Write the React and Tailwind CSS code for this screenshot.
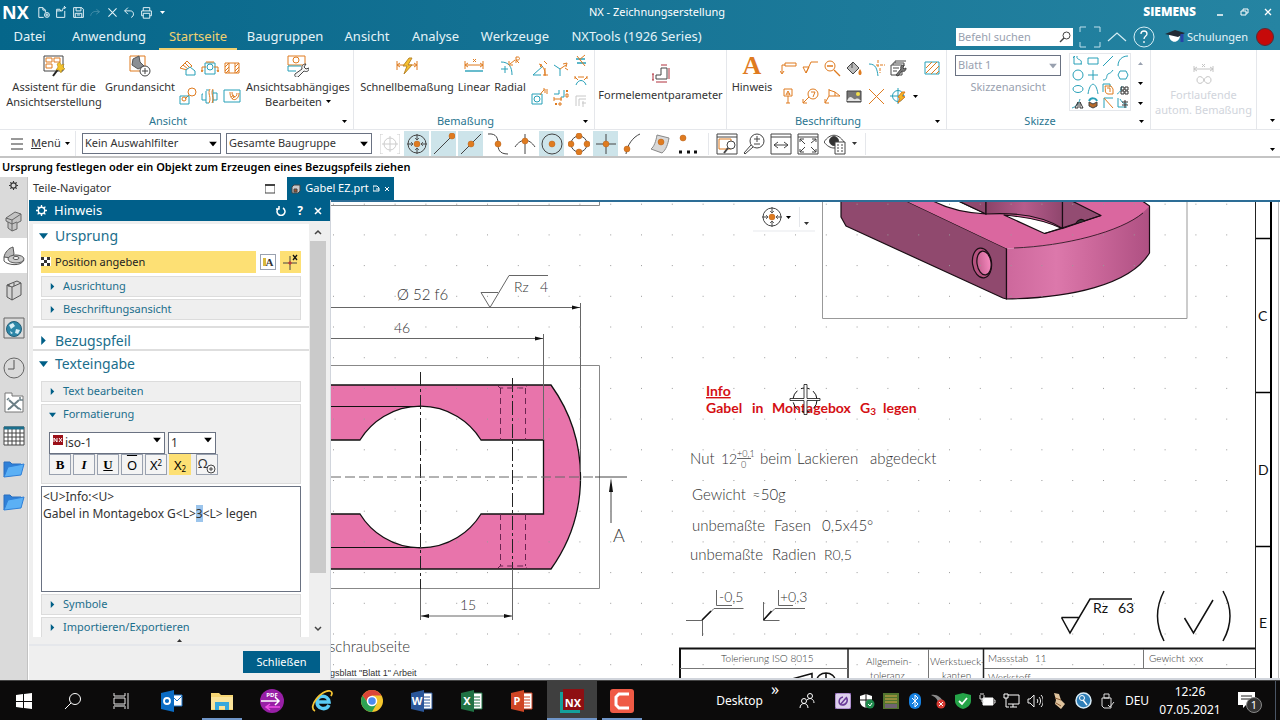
import React, { useEffect, useRef, useState } from "react";

const O = "#df7b1f";
const T = "#27a0b8";
const K = "#444444";

// -----------------------------
// Small building blocks
// -----------------------------
const Svg = ({ w = 20, h = w, vb, children, className = "" }) => (
  <svg
    width={w}
    height={h}
    viewBox={vb || `0 0 ${w} ${h}`}
    fill="none"
    stroke={K}
    className={`shrink-0 ${className}`}
    aria-hidden="true"
  >
    {children}
  </svg>
);

const Caret = ({ className = "text-black" }) => (
  <svg width="5" height="3" viewBox="0 0 5 3" className={`shrink-0 fill-current ${className}`} aria-hidden="true">
    <path d="M0 0h5L2.5 3z" />
  </svg>
);

const Select = ({ label, options, className = "", wrap = "", caret = "text-black", icon, ...props }) => (
  <div className={`relative ${wrap}`}>
    {icon && <span className="absolute left-1 top-0 h-full flex items-center">{icon}</span>}
    <select
      aria-label={label}
      className={`w-full h-full appearance-none border border-gray-500 rounded-none bg-white outline-none ${className}`}
      {...props}
    >
      {options.map((o) => (
        <option key={o}>{o}</option>
      ))}
    </select>
    <svg width="8" height="5" viewBox="0 0 8 5" className={`absolute right-1 top-1/2 -translate-y-1/2 pointer-events-none fill-current ${caret}`}>
      <path d="M0 0h8L4 5z" />
    </svg>
  </div>
);

const Dot = ({ x, y }) => <circle cx={x} cy={y} r="3" fill={O} stroke="#b8611a" strokeWidth="0.5" />;

const Target = () => (
  <Svg w={20}>
    <circle cx="10" cy="10" r="9" />
    <path d="M10 0v6M10 14v6M0 10h6M14 10h6" />
    <path d="M8 4l2 2 2-2M8 16l2-2 2 2M4 8l2 2-2 2M16 8l-2 2 2 2" strokeWidth="0.8" />
    <Dot x="10" y="10" />
  </Svg>
);

const Gear = ({ color = "#333", size = 11 }) => (
  <Svg w={size} vb="0 0 11 11">
    <circle cx="5.5" cy="5.5" r="3.2" stroke={color} strokeWidth="1.4" />
    <path
      d="M5.5 0v2M5.5 9v2M0 5.5h2M9 5.5h2M1.6 1.6l1.4 1.4M8 8l1.4 1.4M9.4 1.6L8 3M3 8L1.6 9.4"
      stroke={color}
      strokeWidth="1.3"
    />
  </Svg>
);

// -----------------------------
// Title bar and menu tabs
// -----------------------------
const quickIcons = [
  ["Neu", <path d="M1 2h5l3 3v3M1 2v12h6M6 2v3h3M11 8a3 3 0 1 1 0 6a3 3 0 1 1 0-6M11 9v4M9 11h4" />],
  ["Öffnen", <path d="M9 6H2v8h10V6M2 6V4h4l1 2M9 6c0-3 1-4 4-4M11 0l2 2-2 2" />],
  ["Speichern", <path d="M2 2h10l2 2v10H2zM5 2v4h6V2M4 14V9h8v5M6 11h4" />],
  ["Wiederholen", <path d="M2 12c1-5 5-6 10-5M9 4l4 3-4 3" opacity="0.25" />],
  ["Löschen", <path d="M3 3l10 10M13 3L3 13" strokeWidth="1.3" />],
  ["Rückgängig", <path d="M2 6h7c5 0 5 7 1 8M6 2L2 6l4 4" />],
  ["Drucken", <path d="M4 6V2h8v4M4 12H2V6h12v6h-2M4 9h8v6H4z" />],
];

const TitleBar = () => (
  <div className="h-6 flex items-center text-white">
    <div className="flex-1 flex items-center">
      <span className="w-9 pl-[2px] font-bold text-lg leading-6 font-[Open_Sans]">NX</span>
      <div className="flex items-center gap-[2px] pl-px">
        {quickIcons.map(([name, path]) => (
          <button key={name} aria-label={name} className="w-[15px] h-4 flex items-center justify-center">
            <Svg w={13} vb="0 0 16 16">
              <g stroke="#e6f4f8" strokeWidth="1.2">{path}</g>
            </Svg>
          </button>
        ))}
        <Caret className="text-white ml-1" />
      </div>
    </div>
    <h1 className="pl-[34px] text-[11px]">NX - Zeichnungserstellung</h1>
    <div className="flex-1 flex items-center justify-end">
      <span className="font-[Open_Sans] font-extrabold text-[12px] mr-5">SIEMENS</span>
      <button aria-label="Minimieren" className="w-6"><Svg w={8}><path d="M1 7h6" stroke="#fff" strokeWidth="1.5" /></Svg></button>
      <button aria-label="Wiederherstellen" className="w-6"><Svg w={9}><path d="M3 3V1h5v4H6M1 3h5v4H1z" stroke="#fff" /></Svg></button>
      <button aria-label="Fenster schließen" className="w-4"><Svg w={8}><path d="M1 1l6 6M7 1L1 7" stroke="#fff" strokeWidth="1.3" /></Svg></button>
    </div>
  </div>
);

const tabs = [
  ["Datei", "w-[59px]"],
  ["Anwendung", "w-[100px]"],
  ["Startseite", "w-[78px]"],
  ["Baugruppen", "w-[96px]"],
  ["Ansicht", "w-[68px]"],
  ["Analyse", "w-[69px]"],
  ["Werkzeuge", "w-[90px]"],
  ["NXTools (1926 Series)", "w-[153px]"],
];

const MenuTabs = () => (
  <nav className="h-[26px] flex items-stretch text-[#e4f3f8] text-[13px]">
    {tabs.map(([name, width]) => (
      <button
        key={name}
        className={`${width} whitespace-nowrap border-b-2 pt-[2px] ${
          name === "Startseite" ? "text-[#f0d070] border-[#f0d070]" : "border-transparent"
        }`}
      >
        {name}
      </button>
    ))}
    <div className="flex-1 flex items-center justify-end gap-[6px] pr-[6px]">
      <label className="w-[117px] h-[18px] bg-white flex items-center px-[2px]">
        <input
          aria-label="Befehl suchen"
          placeholder="Befehl suchen"
          className="w-full min-w-0 text-[11px] placeholder:text-gray-400 outline-none text-black"
        />
        <Svg w={12}><circle cx="7.5" cy="4.5" r="3.5" /><path d="M5 7l-4 4" strokeWidth="1.5" /></Svg>
      </label>
      <button aria-label="Vollbild"><Svg w={22}><path d="M1 6V1h6M15 1h6v5M21 16v5h-6M7 21H1v-5" stroke="#bfe0ec" /></Svg></button>
      <button aria-label="Multifunktionsleiste"><Svg w={20} h={12}><path d="M1 10l9-8 9 8" stroke="#d6eef5" strokeWidth="1.2" /></Svg></button>
      <button aria-label="Hilfe">
        <Svg w={22}>
          <circle cx="11" cy="11" r="10" stroke="#d6eef5" />
          <path d="M8 8c0-4 6-4 6 0c0 2-3 2-3 5M11 15v2" stroke="#fff" strokeWidth="1.3" />
        </Svg>
      </button>
      <button className="flex items-center gap-[2px] text-[11px] ml-1 mr-[2px]">
        <Svg w={20} h={14}>
          <path d="M4 5c0 9 11 9 11 0z" fill="#fff" stroke="none" />
          <path d="M0 4l10-4 10 3-7 4z" fill="#222a35" stroke="none" />
          <path d="M17 4v8" stroke="#2844a8" strokeWidth="3" />
        </Svg>
        Schulungen
      </button>
      <span className="w-[18px] h-[18px] rounded-full bg-[#c60a0a] border border-[#5a2a35]" />
    </div>
  </nav>
);

// -----------------------------
// Ribbon
// -----------------------------
const RibbonButton = ({ icon, lines, width, menu, className = "" }) => (
  <button className={`${width} flex flex-col items-center whitespace-nowrap text-[11px] leading-[15px] ${className}`}>
    <span className="h-[26px] flex items-center justify-center">{icon}</span>
    {lines.map((l, i) => (
      <span key={l} className="flex items-center gap-1">
        {l}
        {menu && i === lines.length - 1 && <Caret />}
      </span>
    ))}
  </button>
);

const Group = ({ label, children, className = "" }) => (
  <section className={`relative flex flex-col border-r border-gray-200 pt-[3px] ${className}`}>
    <div className="h-[60px] flex items-start">{children}</div>
    {label !== undefined && (
      <div className="h-4 flex items-center text-[11px] text-[#2a7590] pr-[6px]">
        <span className="flex-1 text-center pr-[6px]">{label}</span>
        <Caret />
      </div>
    )}
  </section>
);

const IconGrid = ({ icons, cols, className = "" }) => (
  <div className={`grid ${cols} ${className}`}>
    {icons.map((icon, i) => (
      <button key={i} aria-label={`Werkzeug ${i + 1}`} className="h-7 flex items-center justify-center">
        {icon}
      </button>
    ))}
  </div>
);

const viewIcons = [
  <Svg w={18}><path d="M1 9L8 2l5 5-5 4zM4 6l5 4M6 4l4 4" stroke={O} /><path d="M7 16v-5l4-3 5 4v4z" stroke={T} fill="#fff" /></Svg>,
  <Svg w={18}><path d="M4 4h10v11H4z" stroke={T} /><circle cx="9" cy="8" r="3" stroke={T} /><path d="M1 12V8h4M17 12V8h-4M0 11l1 2 1-2M16 11l1 2 1-2M5 3h8" stroke={O} /></Svg>,
  <Svg w={16}><path d="M1 3h14v10H1zM5 3v10M11 3v10M1 7l4-4M1 11l4-4M2 13l3-3M11 7l4-4M11 11l4-4M12 13l3-3" stroke={O} /></Svg>,
  <Svg w={18}><circle cx="13" cy="5" r="4" stroke={O} /><path d="M10 8l-4 4" stroke={O} /><path d="M1 9h9v8H1z" stroke={T} /><circle cx="5" cy="12" r="2" stroke={O} /></Svg>,
  <Svg w={18}><path d="M5 4v12M2 7H1v6h4M5 3h3M5 16h3M12 3v13M12 6h4v7h-4" stroke={T} /><path d="M9 2c-3 5 2 8-1 14M12 2c-3 5 2 8-1 14" stroke={O} /></Svg>,
  <Svg w={18}><path d="M1 3h16v12H1z" stroke={T} /><path d="M7 5c0 11 9 9 9 1M9 5c0 7 5 6 5 1M8 10l3-2M9 12l3-3" stroke={O} /></Svg>,
];

const dimIcons = [
  <Svg w={18}><path d="M12 6L2 15h8" stroke={T} /><path d="M9 5c4 2 5 5 5 10M8 4l3 1-2 2M13 1l3 3M12 15h5M14 8v8" stroke={O} /></Svg>,
  <Svg w={18}><path d="M8 16V9L2 5" stroke={T} /><path d="M8 9l6-4M11 4l4-1-1 4M13 8l3 2" stroke={O} /></Svg>,
  <Svg w={18}><path d="M1 6h10v10H1z" stroke={T} /><circle cx="6" cy="11" r="3" stroke={T} /><path d="M9 7l2-3 2-2M12 1h2v4M16 1v5" stroke={O} /></Svg>,
  <Svg w={18}><path d="M2 6h5V2M12 2v7h-3" stroke={T} /><path d="M2 11h8M2 9v4M9 9v4M3 15l2 2M5 15l-2 2M7 15h2v2H7zM14 2l2 2M16 2l-2 2M14 6h2v3h-2z" stroke={O} /></Svg>,
];

const dimSmall = [
  <Svg w={14}><path d="M2 5h9M3 9h9" stroke={T} strokeWidth="1.4" /><path d="M3 2l8 10M11 1l-6 5" stroke={O} /></Svg>,
  <Svg w={14}><path d="M2 11c2-6 8-6 10 0" stroke={T} /><path d="M1 3l3 3M13 3l-3 3M4 3h6M1 2v3M13 2v3" stroke={O} /></Svg>,
  <Svg w={14}><path d="M2 12V2h10M5 12V5h7M8 9h4M9 7v6" stroke="#c8c8c8" /></Svg>,
];

const noteIcons = [
  <Svg w={17}><path d="M5 3h11v3H5zM5 5H2v8M0 11l2 3 2-3" stroke={O} /></Svg>,
  <Svg w={17}><path d="M1 7h6l-3 6-3-6M4 13L9 2h7" stroke={O} /></Svg>,
  <Svg w={17}><circle cx="6" cy="6" r="5" stroke={O} /><path d="M3 6h6M10 10l6 6" stroke={O} strokeWidth="1.4" /></Svg>,
  <Svg w={17}><path d="M1 8l6-6 6 6-6 6z" fill="#bbb" /><path d="M6 3v5" /><path d="M14 9c3 4 1 6 0 6s-3-2 0-6z" fill={O} stroke="none" /></Svg>,
  <Svg w={17}><path d="M1 4c7 0 8 5 9 12" stroke={T} /><path d="M10 0v3M10 5v2M8 5h9M12 8v5" stroke={O} strokeDasharray="3 1" /></Svg>,
  <Svg w={17}><path d="M1 5h11v10H1zM3 5V3h11v3M5 3V1h11" /><path d="M3 8h6M3 11h4" /><path d="M6 15l5-6c-1-3 1-4 3-4l-1 3 1 1 2-1c0 3-2 4-4 3l-4 5z" fill="#777" stroke="#444" /></Svg>,
  <Svg w={17}><path d="M4 1h8v7H4zM8 8v7M6 15h4" stroke={O} /><path d="M6 7l2-4 2 4M7 6h3" stroke={O} /></Svg>,
  <Svg w={17}><circle cx="11" cy="6" r="5" stroke={O} /><path d="M9 4h4l-2 5M7 9l-6 6M1 11v4h4" stroke={O} /></Svg>,
  <Svg w={17}><path d="M5 1v7L1 15M1 11v4h4M5 2l6 2v4H5M11 4l5 4h-5" stroke={O} /></Svg>,
  <Svg w={17}><path d="M1 3h14v11H1z" fill="#777" /><path d="M1 13c3-7 5-3 7-2s3-3 7 2z" fill="#e5e5e5" stroke="none" /><circle cx="12" cy="6" r="2" fill="#f4e04a" stroke="none" /></Svg>,
  <Svg w={17}><path d="M1 1l15 15M16 1L1 16" stroke={O} /></Svg>,
  <Svg w={17}><circle cx="8" cy="8" r="5.5" stroke={T} /><path d="M8 0v16M0 8h15" stroke={T} /><path d="M12 4L8 9l2 1-2 5 7-6-3-1 3-4z" fill="#f2b824" stroke={O} /></Svg>,
];

const galleryPaths = [
  <path d="M2 1v8h8M5 1c-1 5 6 2 4 8M1 3l2-2" />,
  <path d="M1 3h10v6H1z" />,
  <path d="M1 11L11 1" />,
  <path d="M1 11C1 5 5 1 11 1" />,
  <circle cx="6" cy="6" r="5" />,
  <path d="M6 1v10M1 6h10" />,
  <path d="M1 11c5 0 3-5 5-6s3-1 5-4" />,
  <path d="M3 2h6l2 4-2 4H3L1 6z" />,
  <ellipse cx="6" cy="6" rx="5" ry="3.5" />,
  <path d="M1 11C3-2 9-2 11 11" />,
  <g><path d="M1 9V1h7v3" /><path d="M3 3h6l2 3v5H6c-4-1-2-4-3-8zM5 5h3v4" stroke={O} /></g>,
  <g><path d="M0 11c2-1 4-3 5-8" /><path d="M4 4h3v3H4zM8 4h3v3H8zM4 8h3v3H4zM8 8h3v3H8z" stroke="#333" /></g>,
  <g><path d="M0 11c3-1 7-4 8-9" /><path d="M3 11l3-6v6zM8 11V5l3 6z" stroke="#333" /></g>,
  <g><path d="M2 4c2-4 7-3 8 0" strokeWidth="2" /><path d="M2 5l4 2 4-2v4l-4 2-4-2z" fill="#b76a2b" stroke="#444" /></g>,
  <g><path d="M2 11V1h9" /><path d="M2 1l9 10" stroke={O} /></g>,
  <g><path d="M1 1v9h9M3 2c3 5 4 5 7 5" /><path d="M5 5h6M5 8h6M8 3v8" stroke="#333" /></g>,
];

const Ribbon = () => (
  <div className="h-[80px] flex bg-white border-b border-gray-200">
    <Group label="Ansicht">
      <RibbonButton
        width="w-[108px]"
        lines={["Assistent für die", "Ansichtserstellung"]}
        icon={
          <Svg w={22}>
            <path d="M1 1h19v15H1z" />
            <path d="M3 3h6v4H3zM11 3h6v4h-6zM3 9h6v4H3z" stroke={O} />
            <path d="M10 21l6-8" stroke="#222" strokeWidth="2" />
            <path d="M17 7l1 3 3-1-1 3 2 2-3 1-1 3-2-3-3 0 2-3-1-3z" fill="#f3c22b" stroke="#a57a10" strokeWidth="0.5" />
          </Svg>
        }
      />
      <RibbonButton
        width="w-[64px]"
        lines={["Grundansicht"]}
        icon={
          <Svg w={22}>
            <path d="M1 1h15v15H1z" stroke={O} />
            <path d="M4 4l6-3 1 6 4 4-6 3-6-4z" fill="#8b8f94" stroke="#555" />
            <circle cx="16" cy="16" r="5" fill="#fff" /><path d="M13 16h6M16 13v6" />
          </Svg>
        }
      />
      <IconGrid icons={viewIcons} cols="grid-cols-[22px_22px_22px]" className="ml-[5px] mt-px" />
      <RibbonButton
        width="w-[110px]"
        menu
        lines={["Ansichtsabhängiges", "Bearbeiten"]}
        icon={
          <Svg w={22}>
            <path d="M1 1h17v9H1z" stroke={O} /><circle cx="9" cy="5" r="3" stroke={O} />
            <path d="M1 16v-5h13M1 16h8" stroke={T} />
            <path d="M8 19l7-5c-1-4 2-5 4-5l-2 3 2 2 3-1c0 4-3 4-5 3l-6 6c-2 1-4-1-3-3z" fill="#f3f3f3" />
          </Svg>
        }
      />
    </Group>

    <Group label="Bemaßung">
      <RibbonButton
        width="w-[106px]"
        lines={["Schnellbemaßung"]}
        icon={<Svg w={22}><path d="M1 6v9M21 6v9M1 10h20M4 8l-3 2 3 2M18 8l3 2-3 2" stroke={O} /><path d="M13 3l-6 8h4l-3 8 8-9h-4l4-7z" fill="#f7c12e" stroke="#b9862a" /></Svg>}
      />
      <RibbonButton
        width="w-[28px]"
        lines={["Linear"]}
        icon={<Svg w={20}><path d="M1 5v8M19 5v8M1 9h18M4 7L1 9l3 2M16 7l3 2-3 2M9 3l3 3M12 3L9 6" stroke={O} /><path d="M1 15h18" stroke={T} strokeWidth="1.4" /></Svg>}
      />
      <RibbonButton
        width="w-[44px]"
        lines={["Radial"]}
        icon={<Svg w={20}><path d="M1 6c8 0 11 5 11 13M5 10v7M1 13h7" stroke={T} /><path d="M10 8l5-4M9 5v4h4M16 7V1h2c2 0 2 3 0 3h-2l3 3" stroke={O} /></Svg>}
      />
      <IconGrid icons={dimIcons} cols="grid-cols-[21px_21px]" className="-ml-[3px] mt-[2px]" />
      <div className="w-5 mr-[3px] flex flex-col items-center gap-[6px] pt-px">
        {dimSmall.map((icon, i) => (
          <button key={i} aria-label={`Bemaßung ${i + 1}`} className="h-[14px]">{icon}</button>
        ))}
      </div>
    </Group>

    <Group>
      <RibbonButton
        width="w-[131px]"
        className="mt-[8px]"
        lines={["Formelementparameter"]}
        icon={<Svg w={20}><path d="M10 4v7H5v4h11V4z" /><path d="M10 1h6M18 4v11M5 18h11M1 10h2M2 10v6M1 16h2" stroke="#b0303c" /></Svg>}
      />
    </Group>

    <Group label="Beschriftung">
      <RibbonButton
        width="w-[50px]"
        lines={["Hinweis"]}
        icon={<span className="font-['Liberation_Serif'] font-bold text-[26px] leading-6 text-[#df7b1f]">A</span>}
      />
      <IconGrid icons={noteIcons} cols="grid-cols-[22px_22px_22px_22px_22px_22px]" className="mt-px" />
      <div className="w-[37px] flex flex-col">
        <button aria-label="Schraffur" className="h-7 flex items-center justify-end mt-px pr-[6px]">
          <Svg w={16}><path d="M1 2h14v12H1z" stroke={T} /><path d="M2 8l6-6M2 13L13 2M7 14l8-8M12 14l3-3" stroke={O} /></Svg>
        </button>
        <span className="h-7 flex items-center pl-1"><Caret /></span>
      </div>
    </Group>

    <Group label="Skizze">
      <div className="w-[106px] ml-2 mt-[2px] text-[11px] text-gray-400 text-center">
        <Select label="Blatt" options={["Blatt 1"]} disabled wrap="h-[21px]" className="pl-[2px] border-gray-300 bg-gray-50 text-gray-400" caret="text-gray-400" />
        <span className="block leading-[22px]">Skizzenansicht</span>
      </div>
      <div className="ml-2 border border-gray-200 grid grid-cols-[15px_15px_15px_15px] grid-rows-[14px_14px_14px_14px] place-items-center">
        {galleryPaths.map((p, i) => (
          <button key={i} aria-label={`Skizze ${i + 1}`}>
            <Svg w={12}><g stroke={T}>{p}</g></Svg>
          </button>
        ))}
      </div>
      <div className="w-[19px] h-full flex flex-col items-center justify-around">
        <Caret className="text-gray-400 rotate-180" />
        <Caret />
        <Caret />
      </div>
    </Group>

    <Group>
      <RibbonButton
        width="w-[105px]"
        className="text-gray-300 mt-[8px]"
        lines={["Fortlaufende", "autom. Bemaßung"]}
        icon={<Svg w={22}><path d="M1 3v6M20 3v6M1 6h19M4 4L1 6l3 2M17 4l3 2-3 2M9 1l3 3M12 1L9 4M11 17c-2-5-7-4-7 0s5 5 7 0c2-5 7-4 7 0s-5 5-7 0" stroke="#c4c4c4" /></Svg>}
      />
    </Group>
    <div className="flex-1 flex items-end justify-end pr-[5px] pb-[7px]"><Caret /></div>
  </div>
);

// -----------------------------
// Selection bar
// -----------------------------
const snapIcons = [
  [<Svg w={20}><circle cx="10" cy="10" r="6" stroke="#ccc" /><path d="M10 2v16M2 10h16M3 0H0v20h3M17 0h3v20h-3" stroke="#ccc" /></Svg>, false],
  [<Target />, true],
  [<Svg w={22}><path d="M1 21L20 2" /><Dot x="19" y="3" /></Svg>, true],
  [<Svg w={22}><path d="M1 21L21 1" /><Dot x="11" y="11" /></Svg>, true],
  [<Svg w={22}><path d="M1 1c9-1 10 5 10 10s1 10 10 10" /><Dot x="11" y="11" /></Svg>, false],
  [<Svg w={22}><path d="M1 14c6-9 14-9 20 0M11 1v20" /><Dot x="11" y="8" /></Svg>, false],
  [<Svg w={22}><circle cx="11" cy="11" r="10" /><Dot x="11" y="11" /></Svg>, true],
  [<Svg w={22}><circle cx="11" cy="11" r="8" /><Dot x="11" y="3" /><Dot x="11" y="19" /><Dot x="3" y="11" /><Dot x="19" y="11" /></Svg>, false],
  [<Svg w={22}><path d="M11 1v20M1 11h20" /><Dot x="11" y="11" /></Svg>, true],
  [<Svg w={22}><path d="M4 21C5 12 11 4 18 1" /><Dot x="5" y="16" /></Svg>, false],
  [<Svg w={22}><path d="M2 16C5 14 7 8 8 2l12 3c-1 6-3 12-7 15z" fill="#d8d8d8" stroke="#888" /><Dot x="12" y="9" /></Svg>, false],
  [<Svg w={22}><Dot x="7" y="5" /><path d="M3 19h3M11 19h3M18 19h3" stroke="#111" strokeWidth="3" /></Svg>, false],
];

const zoomIcons = [
  <Svg w={22}><path d="M1 1h20v20H1zM1 4h20" /><path d="M3 6h12v10H3z" stroke={O} /><circle cx="15" cy="12" r="4" fill="#fff" /><path d="M12 15l-4 5" strokeWidth="2" /></Svg>,
  <Svg w={22}><circle cx="14" cy="8" r="7" /><path d="M11 6h6M14 3v6M11 11h6M8 12l-7 8 1 1 8-7" /></Svg>,
  <Svg w={22}><path d="M1 1h20v20H1zM1 4h20M4 12h14M8 9l-4 3 4 3M14 9l4 3-4 3" /></Svg>,
  <Svg w={22}><path d="M1 1h20v20H1zM1 4h20M3 6l5 5M3 6h4M3 6v3M19 6l-5 4M19 6h-4M19 6v3M3 19l5-5M3 19h4M3 19v-3M19 19l-5-5M19 19h-4M19 19v-3" /></Svg>,
  <Svg w={22}><path d="M0 9c6-9 14-9 20 0c-6 8-14 8-20 0z" /><circle cx="10" cy="8" r="4.5" fill="#333" /><path d="M11 9h10v12H11z" fill="#fff" /><path d="M13 12h2M17 12h2M13 15h2M17 15h2M13 18h2M17 18h2" /></Svg>,
];

const SelectionBar = () => (
  <div className="h-7 flex items-center pt-px bg-white border-b-2 border-[#c4c4c4] text-[11px]">
    <button className="w-[76px] h-full flex items-center gap-[8px] pl-[11px] border-r border-gray-200">
      <Svg w={12}><path d="M0 1h12M0 6h12M0 11h12" stroke="#333" /></Svg>
      <span className="flex items-center gap-1"><span><u>M</u>enü</span><Caret /></span>
    </button>
    <Select label="Auswahlfilter" options={["Kein Auswahlfilter"]} wrap="w-[139px] h-[21px] ml-[6px]" className="pl-[2px]" />
    <Select label="Auswahlbereich" options={["Gesamte Baugruppe"]} wrap="w-[146px] h-[21px] ml-[5px]" className="pl-[2px]" />
    <div className="flex ml-[4px]">
      {snapIcons.map(([icon, active], i) => (
        <button key={i} aria-label={`Fangpunkt ${i + 1}`} className="w-[27px] h-[25px] px-px">
          <span className={`h-full flex items-center justify-center ${active ? "bg-[#cde4ea]" : ""}`}>{icon}</span>
        </button>
      ))}
    </div>
    <div className="flex items-center ml-[8px] border-x border-gray-200 h-[22px] pl-[4px] pr-2">
      {zoomIcons.map((icon, i) => (
        <button key={i} aria-label={`Zoom ${i + 1}`} className="w-[27px] flex justify-center">{icon}</button>
      ))}
      <Caret className="ml-1" />
    </div>
    <div className="flex-1 flex justify-end pr-[5px] pt-3"><Caret /></div>
  </div>
);

// -----------------------------
// Resource bar
// -----------------------------
const folder = (
  <Svg w={22}>
    <path d="M1 19V4h6l2 2h9v3" fill="#2f80d8" stroke="#2a6fbe" />
    <path d="M1 19L5 9l16-3-3 11z" fill="#5bb0f5" stroke="#2f80d8" />
  </Svg>
);

const resources = [
  ["Baugruppen-Navigator", "h-[35px]", <Svg w={20} h={22}><path d="M2 8l9-6 6 2v7l-4 2v6l-5 2-4-3v-6l-2-1z" fill="#c4c4c4" stroke="#666" /><path d="M2 8l6 2 9-6M8 10v11M4 12l4 2 5-2" stroke="#666" /></Svg>],
  ["Teile-Navigator", "h-[35px] bg-white", <Svg w={22}><path d="M1 12c1-5 5-9 9-10l1 7-2 4z" fill="#bbb" stroke="#555" /><ellipse cx="13" cy="14" rx="8" ry="4" fill="#ccc" stroke="#555" /><ellipse cx="13" cy="13" rx="3" ry="1.5" fill="#fff" stroke="#555" /><path d="M1 12v4c3 4 17 6 20-1" stroke="#555" /></Svg>],
  ["Bibliothek", "h-[33px]", <Svg w={18} h={22}><path d="M2 6l10-4 4 2v12l-9 5-5-3zM2 6l5 2 9-4M7 8v13M4 5v3M9 4v3" fill="#d4d4d4" stroke="#555" /></Svg>],
  ["Web-Browser", "h-[36px] my-[4px]", <Svg w={22}><path d="M1 1h20v20H1z" stroke="#666" /><circle cx="11" cy="12" r="7.5" fill="#2d87a8" stroke="#245f78" /><path d="M6 8l4-2 2 3-4 3zM13 12l4 1-2 4-3-1zM7 14l3 2-2 1z" fill="#d7eef5" stroke="none" /></Svg>],
  ["Historie", "h-[36px]", <Svg w={22}><circle cx="11" cy="11" r="10" stroke="#666" /><path d="M11 3v9H5" stroke="#555" /></Svg>],
  ["Werkzeuge", "h-[33px]", <Svg w={22}><path d="M2 5V1h7v3h11v16H2z" fill="#fff" stroke="#777" /><path d="M6 8l10 9M16 8L6 17" stroke="#6b7f86" strokeWidth="2" /><path d="M4 8l2-2M17 5v3h3M5 18l1-2M16 16l2 2" stroke="#6b7f86" strokeWidth="1.5" /></Svg>],
  ["Tabelle", "h-[33px]", <Svg w={22}><path d="M1 2h20v18H1z" fill="#fff" /><path d="M1 3h20" stroke="#1b6f8d" strokeWidth="3" /><path d="M1 8h20M1 12h20M1 16h20M5 4v16M9 4v16M13 4v16M17 4v16" /></Svg>],
  ["Ordner 1", "h-[33px]", folder],
  ["Ordner 2", "h-[33px]", folder],
];

const ResourceBar = () => (
  <aside className="w-[28px] shrink-0 bg-[#dadada] border-r border-[#c2c2c2] flex flex-col items-center">
    <button aria-label="Optionen" className="h-[26px] flex items-start pt-[4px]"><Gear size={9} /></button>
    {resources.map(([name, size, icon]) => (
      <button key={name} aria-label={name} className={`w-full flex items-center justify-center ${size}`}>
        {icon}
      </button>
    ))}
  </aside>
);

// -----------------------------
// Note dialog
// -----------------------------
const Arrow = ({ open, size = 8 }) => (
  <svg width={size} height={size} viewBox="0 0 8 8" className="fill-[#005f87] shrink-0" aria-hidden="true">
    <path d={open ? "M0 2h8L4 7z" : "M2 0v8l4-4z"} />
  </svg>
);

const Heading = ({ open, children, className = "" }) => (
  <button className={`w-full h-[22px] flex items-center gap-[7px] pl-[6px] text-[14px] text-[#1b6e8c] ${className}`}>
    <Arrow open={open} size={9} />
    {children}
  </button>
);

const SubHeading = ({ open, children }) => (
  <button className="w-full h-[19px] flex items-center gap-[7px] pl-[7px] text-[11px] text-[#1b6e8c]">
    <Arrow open={open} size={7} />
    {children}
  </button>
);

const box = "border border-[#dcdcdc] bg-[#efefef]";
const format = "w-[22px] h-[21px] border border-gray-400 bg-[#f4f4f4] text-black text-[13px] leading-4 flex items-center justify-center";

const NoteDialog = () => {
  const [text, setText] = useState("<U>Info:<U>\nGabel in Montagebox G<L>3<L> legen");
  const ref = useRef(null);

  // keep the subscript value selected when the dialog opens
  useEffect(() => {
    const pos = ref.current.value.indexOf(">3<") + 1;
    ref.current.focus({ preventScroll: true });
    ref.current.setSelectionRange(pos, pos + 1);
  }, []);

  return (
    <section className="w-[302px] shrink-0 flex flex-col min-h-0 bg-[#efefef] border-r border-gray-300">
      <header className="h-[21px] shrink-0 bg-[#005f8a] text-white flex items-center pl-[7px] pr-[8px]">
        <Gear color="#fff" />
        <h2 className="flex-1 pl-[7px] text-[13px]">Hinweis</h2>
        <button aria-label="Zurücksetzen"><Svg w={10}><path d="M3 2a4 4 0 1 0 4 0M3 0v3H0" stroke="#fff" strokeWidth="1.5" /></Svg></button>
        <button aria-label="Hilfe" className="w-[28px] font-bold text-[12px]">?</button>
        <button aria-label="Dialog schließen"><Svg w={8}><path d="M1 1l6 6M7 1L1 7" stroke="#fff" strokeWidth="1.5" /></Svg></button>
      </header>

      <div className="h-[416px] shrink-0 flex pl-[4px] pr-[4px] pt-[3px] overflow-hidden">
        <div className="flex-1 bg-white overflow-hidden">
          <Heading open>Ursprung</Heading>
          <div className="flex items-center px-[8px] mt-[5px]">
            <button className="flex-1 h-[22px] bg-[#fde074] text-[11px] text-[#222] flex items-center gap-1">
              <Svg w={10}>
                <path d="M0 0h10v9H0z" fill="#fff" stroke="none" />
                <path d="M0 0h3v3H0zM6 0h3v3H6zM3 3h3v3H3zM0 6h3v3H0zM6 6h3v3H6z" fill="#333" stroke="none" />
              </Svg>
              Position angeben
            </button>
            <button aria-label="Ursprungswerkzeug" className="w-4 h-4 mx-[4px] border border-gray-400 bg-white font-['Liberation_Serif'] font-bold text-[11px] leading-3 flex items-center justify-center">
              <i className="w-[3px] h-2 bg-[#d9b93e]" />A
            </button>
            <button aria-label="Punkt angeben" className="w-[21px] h-[22px] bg-[#fde074]">
              <Svg w={21}><path d="M3 11h14M10 4v14" /><path d="M13 3l4 5M17 3l-4 5" stroke="#111" strokeWidth="1.3" /><path d="M10 9v4M8 11h4" stroke="#c33" /></Svg>
            </button>
          </div>
          <div className="px-[8px] pt-[3px] space-y-[2px]">
            <div className={box}><SubHeading>Ausrichtung</SubHeading></div>
            <div className={box}><SubHeading>Beschriftungsansicht</SubHeading></div>
          </div>
          <div className="border-y-2 border-[#dedede] mt-[6px] h-[25px] flex items-center pt-[3px]"><Heading>Bezugspfeil</Heading></div>
          <Heading open className="mt-px">Texteingabe</Heading>
          <div className="px-[8px] pt-[7px] space-y-[2px]">
            <div className={box}><SubHeading>Text bearbeiten</SubHeading></div>
            <div className={`${box} h-[80px]`}>
              <SubHeading open>Formatierung</SubHeading>
              <div className="flex gap-[3px] pl-[7px] mt-[5px]">
                <Select
                  label="Schriftart"
                  options={["iso-1"]}
                  wrap="w-[116px] h-[22px]"
                  className="pl-[15px] text-[12px]"
                  icon={<Svg w={10}><path d="M0 0h10v10H0z" fill="#9b1018" stroke="none" /><path d="M1 7V3l3 4V3M6 3l3 4M9 3L6 7" stroke="#fff" /></Svg>}
                />
                <Select label="Schriftgröße" options={["1"]} wrap="w-12 h-[22px]" className="pl-[2px] text-[12px]" />
              </div>
              <div className="flex gap-[2px] pl-[7px] mt-[3px]">
                <button className={`${format} font-bold font-['Liberation_Serif']`}>B</button>
                <button className={`${format} font-bold italic font-['Liberation_Serif']`}>I</button>
                <button className={`${format} font-bold underline font-['Liberation_Serif']`}>U</button>
                <button className={`${format} overline`}>O</button>
                <button className={format}><span>X<sup className="text-[8px]">2</sup></span></button>
                <button className="w-[22px] h-[21px] bg-[#fde074] text-black text-[13px] leading-4 flex items-center justify-center"><span>X<sub className="text-[8px]">2</sub></span></button>
                <button aria-label="Sonderzeichen" className={`${format} ml-[3px]`}>
                  <Svg w={18}>
                    <text x="0" y="12" fill="#333" stroke="none" className="text-[13px]">Ω</text>
                    <circle cx="13" cy="13" r="4" fill="#f4f4f4" />
                    <path d="M11 13h4M13 11v4" />
                  </Svg>
                </button>
              </div>
            </div>
            <textarea
              ref={ref}
              aria-label="Text"
              value={text}
              onChange={(e) => setText(e.target.value)}
              spellCheck={false}
              className="block w-full h-[106px] resize-none bg-white border border-gray-500 px-px py-px text-[12px] leading-[17px] text-[#333] outline-none selection:bg-[#9cc5ec] selection:text-[#333]"
            />
            <div className={box}><SubHeading>Symbole</SubHeading></div>
            <div className={box}><SubHeading>Importieren/Exportieren</SubHeading></div>
          </div>
        </div>
        <div className="w-[17px] flex flex-col items-center bg-[#efefef]">
          <div className="h-[17px] flex items-center"><Svg w={8}><path d="M1 5l3-3 3 3" strokeWidth="1.5" /></Svg></div>
          <div className="w-4 h-[332px] bg-[#cacaca]" />
          <div className="flex-1 flex items-end pb-1"><Svg w={8}><path d="M1 2l3 3 3-3" strokeWidth="1.5" /></Svg></div>
        </div>
      </div>

      <div className="h-[9px] shrink-0 flex justify-center items-center border-b-2 border-gray-200"><Caret className="rotate-180" /></div>
      <footer className="flex justify-end pr-[10px] pt-[5px]">
        <button className="w-[77px] h-[22px] bg-[#005f8a] text-white text-[11px]">Schließen</button>
      </footer>
    </section>
  );
};

// -----------------------------
// Drawing sheet
// -----------------------------
const Dimensions = () => (
  <g stroke="#666" fill="none">
    <path d="M331 205.500H599.500V200M331 365.500H599.500V588.500H331" stroke="#888" />
    <path d="M331 307.500H580M580.500 303V472M331 338.500H543M543.500 334V440" />
    <path d="M580 307.500l-8-2v4zM543 338.500l-8-2v4z" fill="#111" stroke="none" />
    <path d="M481 292.500H498M481 292.500L490 307.500L509 275.500H548" />
    <path d="M420.500 589V620M512.500 569V620M420.500 616H512.500" />
    <path d="M421 616l8-2v4zM512 616l-8-2v4z" fill="#111" stroke="none" />
    <path d="M420.500 372V589M512.500 378V569" stroke="#222" strokeDasharray="14 3 3 3" />
    <path d="M331 477H595" strokeDasharray="10 4" />
    <path d="M595 477H627M611 523V490" stroke="#444" />
    <path d="M611 478l-2 14h4z" fill="#111" stroke="none" />
    <path d="M500.500 388V440M525.500 388V440M500.500 514V566M525.500 514V566M498 386l2 2h25l2-2M498 568l2-2h25l2 2" stroke="#6b2450" strokeDasharray="6 4" />
  </g>
);

const SectionView = () => (
  <g stroke="#111">
    <path
      d="M331 385H551A158 158 0 0 1 551 569H331V514H360A71 71 0 0 0 481 514H543.500V440H481A71 71 0 0 0 360 440H331Z"
      fill="#e874ab"
      stroke="none"
    />
    <path d="M331 385H551A158 158 0 0 1 551 569H331M331 514H360A71 71 0 0 0 481 514H543.500V440H481A71 71 0 0 0 360 440H331" fill="none" strokeWidth="1.3" />
    <path d="M331 406.500H420M331 547.500H420" fill="none" />
  </g>
);

const IsoView = () => (
  <g stroke="#1a0d14" strokeWidth="1.2" strokeLinejoin="round">
    <path d="M822.500 200V318.500H1187V200" stroke="#999" fill="none" strokeWidth="1" />
    <path d="M841 198V217L846 226L1003 298L1006.500 299V248.500L900 198Z" fill="#90496e" />
    <path d="M900 198L1006.500 248.500C1065 246 1135 233 1149.500 206L1138 198Z" fill="#da679f" stroke="none" />
    <path d="M1006.500 248.500C1065 246 1125 234 1149.500 206V253C1130 285 1070 298 1006.500 299Z" fill="url(#front)" stroke="none" />
    <path d="M1014 248C1065 246 1120 232 1143 213" fill="none" strokeWidth="0.8" />
    <path d="M1138 198L1149.500 206V253C1130 285 1070 298 1006.500 299V248.500" fill="none" />
    <path d="M928 198Q950 212 986 214L952 198Z" fill="#fff" />
    <path d="M952 198L986 214V198Z" fill="#90496e" />
    <path d="M1004 215Q1040 218 1062 228.500L1044.500 233.500Z" fill="#fff" />
    <path d="M986 198V214Q1035 211 1062.500 228.500V198Z" fill="url(#bore)" />
    <path d="M1062.500 198V228.500L1101 215.500L1066 198Z" fill="#934c72" />
    <path d="M1044.500 233.500L1101 215.500" />
    <path d="M1076 223q4-6 9-2" fill="#333" />
    <ellipse cx="982" cy="263" rx="9.500" ry="15" transform="rotate(-8 982 263)" fill="#b5527f" />
    <ellipse cx="984" cy="263" rx="7" ry="12" transform="rotate(-8 984 263)" fill="url(#hole)" />
  </g>
);

const TitleBlock = () => (
  <g stroke="#222" fill="none">
    <path d="M680 680V648.500H1256" strokeWidth="2" stroke="#111" />
    <path d="M848 649V680M983.500 649V680" strokeWidth="1.5" />
    <path d="M928.500 649V680M1143.500 649V668M680 668.500H848M984 668.500H1256" stroke="#777" />
    <path d="M792 679L812 673.500V680M826 673V680M817 680a9 7 0 0 1 18 0" stroke="#111" strokeWidth="1.5" />
    <path d="M1255.500 200V680" />
    <path d="M1271 200V680" strokeWidth="2" stroke="#000" />
    <path d="M1256 238.500H1271M1256 392.500H1271M1256 546.500H1271" strokeWidth="1.5" stroke="#000" />
    <path d="M1278.500 200V680" stroke="#bbb" />
  </g>
);

const SurfaceSymbols = () => (
  <g stroke="#666" fill="none">
    <path d="M716.500 590V605.500H732M743.500 608.500H714L702 620.500H686M702.500 620V636" />
    <path d="M778.500 590V605.500H793M805 608.500H775L763.500 620M763.500 602V620.500H779.500" />
    <path d="M702 620l9-9M763.500 620l8-9" stroke="#111" strokeWidth="1.5" />
    <g stroke="#111" strokeWidth="1.5">
      <path d="M1061.500 617.500H1079M1061.500 617.500L1070 633L1090 599H1132" />
      <path d="M1164 591Q1151 616 1164 641M1223 591Q1237 616 1223 641M1184.500 618L1193.500 633L1213 600" />
    </g>
    <path d="M737 458.500H751" />
  </g>
);

// x, baseline, size, text
const notes = [
  [397, 300, "text-[15px]", "Ø 52 f6"],
  [394, 333, "text-[14px]", "46"],
  [514, 292, "text-[14px]", "Rz"],
  [540, 292, "text-[14px]", "4"],
  [460, 610, "text-[14px]", "15"],
  [613, 542, "text-[18px]", "A"],
  [329, 652, "text-[15px]", "schraubseite"],
  [690, 464, "text-[15px]", "Nut"],
  [721, 464, "text-[14px]", "12"],
  [737, 457, "text-[9px]", "+0,1"],
  [741, 468, "text-[9px]", "0"],
  [760, 464, "text-[15px]", "beim"],
  [797, 464, "text-[15px]", "Lackieren"],
  [870, 464, "text-[15px]", "abgedeckt"],
  [692, 500, "text-[15px]", "Gewicht"],
  [752, 500, "text-[15px]", "≈50g"],
  [692, 531, "text-[15px]", "unbemaßte"],
  [774, 531, "text-[15px]", "Fasen"],
  [822, 531, "text-[15px]", "0,5x45°"],
  [690, 560, "text-[15px]", "unbemaßte"],
  [772, 560, "text-[15px]", "Radien"],
  [824, 560, "text-[14px]", "R0,5"],
  [719, 602, "text-[14px]", "-0,5"],
  [780, 602, "text-[14px]", "+0,3"],
  [721, 662, "text-[10px]", "Tolerierung ISO 8015"],
  [866, 665, "text-[10px]", "Allgemein-"],
  [870, 679, "text-[10px]", "toleranz"],
  [930, 665, "text-[10px]", "Werkstueck-"],
  [942, 679, "text-[10px]", "kanten"],
  [988, 662, "text-[10px]", "Massstab"],
  [1035, 662, "text-[10px]", "11"],
  [1149, 662, "text-[10px]", "Gewicht"],
  [1189, 662, "text-[10px]", "xxx"],
  [988, 681, "text-[10px]", "Werkstoff"],
];

const Sheet = () => (
  <svg
    viewBox="331 202 949 476"
    preserveAspectRatio="xMinYMin slice"
    className="w-full h-full block bg-white font-[Lato]"
    role="img"
    aria-label="Zeichnungsblatt"
  >
    <defs>
      <pattern id="dots" x="333" y="203.7" width="30.8" height="30.7" patternUnits="userSpaceOnUse">
        <rect width="1" height="1" fill="#999" />
      </pattern>
      <linearGradient id="front">
        <stop offset="0" stopColor="#cd689c" />
        <stop offset="0.35" stopColor="#dc78ab" />
        <stop offset="0.6" stopColor="#cc689b" />
        <stop offset="1" stopColor="#ae5082" />
      </linearGradient>
      <linearGradient id="bore">
        <stop offset="0" stopColor="#8a4368" />
        <stop offset="0.5" stopColor="#b65c8c" />
        <stop offset="1" stopColor="#8f466d" />
      </linearGradient>
      <linearGradient id="hole">
        <stop offset="0" stopColor="#c4608f" />
        <stop offset="1" stopColor="#f78abf" />
      </linearGradient>
    </defs>
    <SectionView />
    <Dimensions />
    <IsoView />
    <rect x="331" y="202" width="924" height="476" fill="url(#dots)" />
    <TitleBlock />
    <SurfaceSymbols />
    <g className="font-light" fill="#333">
      {notes.map(([x, y, size, t]) => (
        <text key={`${x}-${y}`} x={x} y={y} className={size}>{t}</text>
      ))}
    </g>
    <g fill="#111" className="text-[14px]">
      <text x="1093" y="613">Rz</text>
      <text x="1118" y="613">63</text>
      <text x="1258" y="321">C</text>
      <text x="1258" y="475">D</text>
      <text x="1259" y="628">E</text>
    </g>
    <text x="330" y="676" className="font-['Liberation_Sans'] text-[9px]" fill="#333">gsblatt "Blatt 1" Arbeit</text>
    <g fill="#d40f14" className="text-[14px] font-bold">
      <text x="706" y="396" className="underline">Info</text>
      <text x="706" y="413">Gabel</text>
      <text x="752" y="413">in</text>
      <text x="772" y="413">Montagebox</text>
      <text x="860" y="413">
        G<tspan dy="2" className="text-[10px]">3</tspan>
      </text>
      <text x="883" y="413">legen</text>
    </g>
    <g stroke="#111" fill="none">
      <circle cx="805" cy="400" r="12" strokeDasharray="9 4" />
      <path d="M790 398.500h14v-14h3v14h13v2h-13v14h-3v-14h-14z" fill="#fff" strokeWidth="0.8" />
    </g>
  </svg>
);

// -----------------------------
// Taskbar
// -----------------------------
const Office = ({ letter, color }) => (
  <Svg w={22}>
    <path d="M11 3h10v16H11z" fill="#fff" stroke={color} />
    <path d="M13 7h6M13 10h6M13 13h6M13 16h6" stroke={color} />
    <path d="M0 3l13-3v22L0 19z" fill={color} stroke="none" />
    <text x="6" y="15" textAnchor="middle" fill="#fff" stroke="none" className="text-[11px] font-bold">{letter}</text>
  </Svg>
);

const apps = [
  ["Start", <Svg w={16}><path d="M0 2l7-1v7H0zM8 1l8-1v8H8zM0 9h7v6l-7-1zM8 9h8v7l-8-1z" fill="#fff" stroke="none" /></Svg>],
  ["Suche", <Svg w={18}><circle cx="11" cy="7" r="5.5" stroke="#fff" /><path d="M7 11l-6 6" stroke="#fff" /></Svg>],
  ["Aktive Anwendungen", <Svg w={18}><path d="M1 1v3h11V1M1 6h11v6H1zM1 17v-3h11v3M15 1v16" stroke="#e8e8e8" /><path d="M1 13h11v2H1z" fill="#888" stroke="none" /></Svg>],
  ["Outlook", <Svg w={22}><path d="M11 5h10v11H11z" fill="#fff" stroke="#1a73c7" /><path d="M11 6l5 5 5-5" stroke="#1a73c7" /><path d="M0 3l13-3v22L0 19z" fill="#0b6cc4" stroke="none" /><circle cx="6" cy="11" r="3" stroke="#fff" strokeWidth="1.8" /></Svg>],
  ["Explorer", <Svg w={22}><path d="M0 3h8l2 2h12v15H0z" fill="#f7d674" stroke="none" /><path d="M0 7h22v12H0z" fill="#fbe49b" stroke="none" /><path d="M4 20v-8h14v8h-4v-4H8v4z" fill="#36a8dc" stroke="none" /></Svg>, true],
  ["PDF", <Svg w={24}><circle cx="12" cy="12" r="12" fill="#981fa6" stroke="none" /><text x="12" y="8" textAnchor="middle" fill="#fff" stroke="none" className="text-[6px] font-bold">PDF</text><path d="M1 12h18M15 8l4 4-4 4" stroke="#fff" strokeWidth="1.5" /><path d="M20 18H7M10 15l-4 3 4 3" stroke="#f04ee8" strokeWidth="1.5" /></Svg>],
  ["Internet Explorer", <Svg w={22}><path d="M18 15c-3 6-12 4-12-3s11-8 12 0H7" stroke="#5accf6" strokeWidth="3.5" /><path d="M4 21C-4 17 11-1 19 1c3 1 2 3 1 5" stroke="#f6c534" strokeWidth="1.8" /></Svg>],
  ["Chrome", <Svg w={22}><circle cx="11" cy="11" r="11" fill="#f5c62d" stroke="none" /><path d="M1.500 5.500A11 11 0 0 1 20.500 5.500H11L7 13z" fill="#dc4638" stroke="none" /><path d="M1.500 5.500A11 11 0 0 0 11 22L15.500 14L7 13z" fill="#2ca153" stroke="none" /><circle cx="11" cy="11" r="4.5" fill="#4b8bf0" stroke="#fff" strokeWidth="1.5" /></Svg>],
  ["Word", <Office letter="W" color="#2a5699" />],
  ["Excel", <Office letter="X" color="#1f7244" />],
  ["PowerPoint", <Office letter="P" color="#cf4524" />],
  ["NX", <Svg w={24}><path d="M0 3h20v21H0z" fill="#14a09a" stroke="none" /><path d="M3 0h21v21H3z" fill="#8e0f12" stroke="none" /><text x="13" y="18" textAnchor="middle" fill="#fff" stroke="none" className="text-[11px] font-bold">NX</text></Svg>, true],
  ["Camtasia", <Svg w={24}><rect width="24" height="24" rx="3" fill="#ef5a45" stroke="none" /><path d="M19 5H9L6 8v8l3 3h10" stroke="#fff" strokeWidth="3" /></Svg>, true],
];

const tray = [
  <Svg w={16}><rect width="16" height="16" rx="2" fill="#ddd0ec" stroke="#8354b0" /><path d="M5 12l6-7M11 4c3 4 0 8-4 8s-4-7 1-8" stroke="#6a3b98" strokeWidth="1.5" /></Svg>,
  <Svg w={16}><path d="M1 3l6-2 6 2v5c0 4-4 6-6 7-3-1-6-3-6-7z" fill="#fff" stroke="none" /><path d="M7 1v14M1 7h12" stroke="#111" /><circle cx="11" cy="11" r="4.5" fill="#1f8a4c" stroke="none" /><path d="M9 11l2 2 2-3" stroke="#fff" /></Svg>,
  <Svg w={16}><path d="M0 0h16v16H0z" fill="#52752f" stroke="none" /><path d="M2 3h12M2 6h12M2 9h12" stroke="#d8a94a" /><path d="M2 12h12M2 14h12" stroke="#8a55b5" /></Svg>,
  <Svg w={16}><rect x="2" width="12" height="16" rx="6" fill="#1580e0" stroke="none" /><path d="M5 5l6 6-3 3V2l3 3-6 6" stroke="#fff" /></Svg>,
  <Svg w={16}><path d="M0 2c6-1 10 2 13 8H7C7 6 4 4 0 2z" fill="#8a8a8a" stroke="none" /><circle cx="10" cy="11" r="4.5" fill="#d63a32" stroke="none" /><path d="M8 9l4 4M12 9l-4 4" stroke="#fff" /></Svg>,
  <Svg w={16}><path d="M0 2l8-2 8 2v6c0 4-4 7-8 8-4-1-8-4-8-8z" fill="#25a348" stroke="none" /><path d="M4 8l3 3 5-6" stroke="#fff" strokeWidth="1.8" /></Svg>,
  <Svg w={17}><path d="M4 6h10v7H4z" fill="#fff" stroke="#fff" /><path d="M15 8h1v3h-1M1 3v4h4V3M3 7v3h2M2 1v2M4 1v2" stroke="#ddd" /></Svg>,
  <Svg w={17}><path d="M5 3h11v9H5M7 15h7M10 12v3M1 2h4v4H1zM3 6v9h3" stroke="#fff" /></Svg>,
  <Svg w={16}><path d="M1 6h2l4-4v12l-4-4H1zM10 6c1 1 1 3 0 4M12 4c2 2 2 6 0 8M14 2c3 3 3 9 0 12" stroke="#eee" /></Svg>,
  <Svg w={16}><path d="M3 0l5 1 2 6 4 4-4 5-6-5 1-4z" fill="#dfc39d" stroke="none" /><path d="M4 5l6 2M5 10l5 3" stroke="#8a5a35" /></Svg>,
  <Svg w={17}><circle cx="8.5" cy="8.5" r="7.5" fill="#2f7fb8" stroke="#d9ecf7" strokeWidth="1.5" /><circle cx="7" cy="6" r="2.5" stroke="#fff" /><path d="M8 8l4 5" stroke="#fff" strokeWidth="1.5" /></Svg>,
  <Svg w={16}><path d="M5 1h5v4H5zM3 5h9v10H5l-2-2zM9 12l2 2 4-5" stroke="#ddd" /></Svg>,
];

const Taskbar = () => (
  <footer className="h-10 shrink-0 bg-[#0c0b0b] text-white flex items-stretch border-t border-[#444]">
    {apps.map(([name, icon, running]) => (
      <button
        key={name}
        aria-label={name}
        className={`w-[50px] flex items-center justify-center relative first:w-[48px] nth-[2]:w-[49px] ${name === "NX" ? "bg-[#3f3f3f]" : ""}`}
      >
        {icon}
        {running && <span className={`absolute bottom-0 h-[2px] bg-[#6f95c8] ${name === "NX" ? "w-full" : "w-10"}`} />}
      </button>
    ))}
    <div className="flex-1" />
    <span className="self-center text-[12px]">Desktop</span>
    <button aria-label="Weitere" className="w-6 self-start text-[16px] leading-4">»</button>
    <button aria-label="Kontakte" className="w-10 flex items-center justify-center">
      <Svg w={16}><circle cx="11" cy="3" r="2.5" stroke="#fff" /><circle cx="5" cy="8" r="2.5" stroke="#fff" /><path d="M1 15c0-6 8-6 8 0M8 7c3-3 7-1 7 3" stroke="#fff" /></Svg>
    </button>
    <div className="flex items-center ml-1">
      {tray.map((icon, i) => (
        <button key={i} aria-label={`Infobereich ${i + 1}`} className="w-6 flex justify-center">{icon}</button>
      ))}
    </div>
    <span className="w-9 self-center text-center text-[12px]">DEU</span>
    <time className="w-[70px] self-center text-center text-[12px] leading-[18px]">12:26<br />07.05.2021</time>
    <button aria-label="Benachrichtigungen" className="w-[50px] flex items-center justify-center">
      <Svg w={26}>
        <path d="M1 4h17v13H9l-3 3v-3H1z" fill="#fff" stroke="none" />
        <path d="M4 8h11M4 11h11" stroke="#222" />
        <circle cx="17" cy="17" r="7.5" fill="#333" stroke="#888" />
        <text x="17" y="21" textAnchor="middle" fill="#fff" stroke="none" className="text-[11px]">1</text>
      </Svg>
    </button>
    <span className="w-[5px] border-l border-gray-600" />
  </footer>
);

const App = () => (
  <div className="h-screen flex flex-col overflow-hidden bg-white text-[#333] font-['Noto_Sans',sans-serif]">
    <header className="bg-linear-to-r from-[#05668a] to-[#2584a2]">
      <TitleBar />
      <MenuTabs />
    </header>
    <Ribbon />
    <SelectionBar />
    <p className="h-[19px] shrink-0 pl-[2px] text-[11px] leading-[18px] font-semibold text-black">
      Ursprung festlegen oder ein Objekt zum Erzeugen eines Bezugspfeils ziehen
    </p>
    <main className="flex-1 min-h-0 flex">
      <ResourceBar />
      <div className="flex-1 min-w-0 flex flex-col">
        <div className="h-[23px] shrink-0 flex items-center text-[11px]">
          <span className="w-[237px] pl-[5px]">Teile-Navigator</span>
          <Svg w={10}><path d="M0 1h10v8H0z" /><path d="M0 1h10" strokeWidth="2" /></Svg>
          <button className="ml-[12px] w-[107px] h-full bg-[#00608a] text-white flex items-center justify-center gap-1 whitespace-nowrap">
            <Svg w={10}><path d="M1 3l2-2h6v6L7 9H1z" fill="#c9c9c9" /><path d="M3 5h3v3H3z" fill="#a0522d" /></Svg>
            Gabel EZ.prt
            <Svg w={7}><path d="M0 1h4l2 2v3H0zM3 4h3" stroke="#fff" /></Svg>
            <Svg w={6}><path d="M1 1l4 4M5 1L1 5" stroke="#fff" /></Svg>
          </button>
        </div>
        <div className="flex-1 min-h-0 flex pl-px">
          <NoteDialog />
          <div className="relative flex-1 min-w-0 border-t-2 border-[#2d6d96] border-b-2 border-b-gray-300">
            <Sheet />
            <div className="absolute left-[422px] top-0 h-[30px] w-[62px] bg-white border-b-2 border-gray-100 flex items-center gap-[4px] pl-[9px] pt-[2px]">
              <Target />
              <Caret />
              <span className="h-5 border-l border-gray-200 ml-[4px]" />
              <Caret className="mt-3" />
            </div>
          </div>
        </div>
      </div>
    </main>
    <Taskbar />
  </div>
);

export default App;
